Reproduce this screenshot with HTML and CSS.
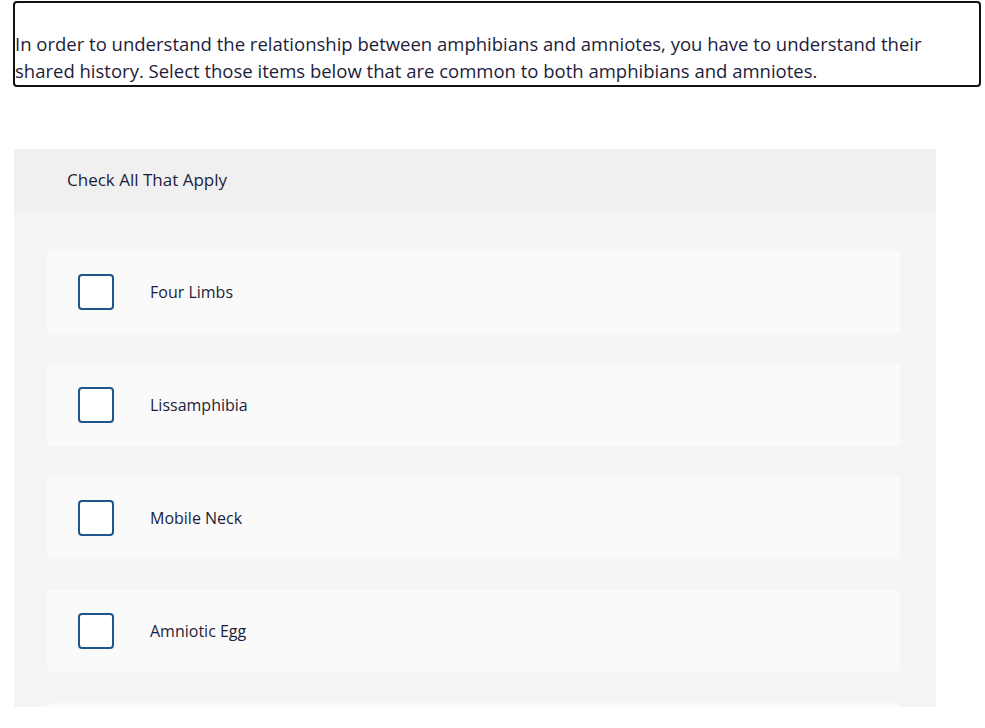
FILE: index.html
```html
<!DOCTYPE html>
<html>
<head>
<meta charset="utf-8">
<link rel="stylesheet" href="styles.css">
</head>
<body>
<div class="page">
  <div class="prompt">
    <p>In order to understand the relationship between amphibians and amniotes, you have to understand their shared history. Select those items below that are common to both amphibians and amniotes.</p>
  </div>
  <div class="panel">
    <div class="panel-head">Check All That Apply</div>
    <div class="panel-body">
      <div class="choice"><span class="box"></span><span class="label">Four Limbs</span></div>
      <div class="choice"><span class="box"></span><span class="label">Lissamphibia</span></div>
      <div class="choice"><span class="box"></span><span class="label">Mobile Neck</span></div>
      <div class="choice"><span class="box"></span><span class="label">Amniotic Egg</span></div>
      <div class="choice"><span class="box"></span><span class="label"></span></div>
    </div>
  </div>
</div>
</body>
</html>
```

FILE: styles.css
```css
html, body {
  margin: 0;
  padding: 0;
  background: #ffffff;
}
body {
  font-family: "Open Sans", Lato, sans-serif;
  color: #1d1d3b;
  height: 728px;
  overflow: hidden;
}
.page {
  padding: 1px 0 0 13px;
  height: 706px;
  overflow: hidden;
  display: flex;
  flex-direction: column;
}
.prompt {
  width: 968px;
  border: 2px solid #111;
  border-radius: 4px;
  padding-top: 27px;
  box-sizing: border-box;
  height: 86px;
}
.prompt p {
  margin: 0;
  font-size: 18.5px;
  line-height: 27px;
}
.panel {
  margin-top: 62px;
  margin-left: 1px;
  width: 922px;
  flex: 1;
  min-height: 0;
  overflow: hidden;
  border-radius: 4px 4px 0 0;
  background: #f5f5f5;
  display: flex;
  flex-direction: column;
}
.panel-head {
  background: #f0f0f0;
  height: 62px;
  flex: none;
  display: flex;
  align-items: center;
  padding-left: 53px;
  padding-bottom: 2px;
  box-sizing: border-box;
  font-size: 17px;
}
.panel-body {
  padding: 40px 36px 0 33px;
  display: flex;
  flex-direction: column;
  gap: 31px;
}
.choice {
  background: #fafafa;
  border-radius: 4px;
  height: 82px;
  flex: none;
  display: flex;
  align-items: center;
  padding-left: 31px;
}
.box {
  width: 36px;
  height: 36px;
  box-sizing: border-box;
  border: 2px solid #1f568a;
  border-radius: 4px;
  background: #fff;
  flex: none;
}
.label {
  margin-left: 36px;
  font-size: 16px;
}
```
